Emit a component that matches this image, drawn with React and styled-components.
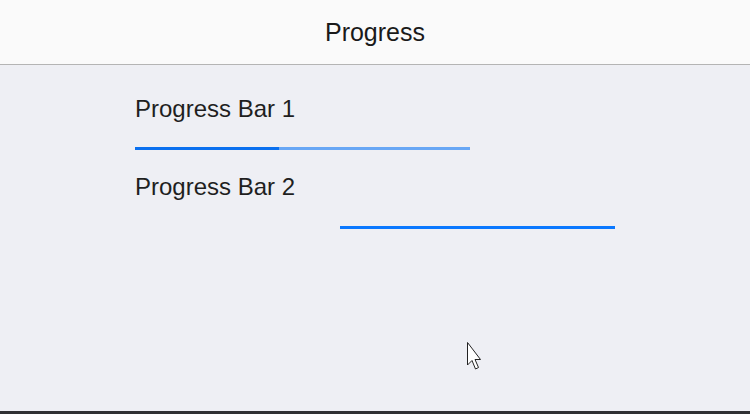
import React from "react";
import styled, { createGlobalStyle } from "styled-components";

const GlobalStyle = createGlobalStyle`
  html, body {
    margin: 0;
    padding: 0;
    height: 100%;
  }
  body {
    font-family: "Liberation Sans", Arial, sans-serif;
    background: #eeeff4;
    color: #1f1f1f;
  }
  #root {
    height: 100%;
  }
`;

const Page = styled.div`
  position: relative;
  height: 414px;
  display: flex;
  flex-direction: column;
  overflow: hidden;
`;

const Header = styled.header`
  height: 64px;
  flex-shrink: 0;
  display: flex;
  align-items: center;
  justify-content: center;
  background: #fafafa;
  border-bottom: 1px solid #b4b4b4;
`;

const Title = styled.h1`
  margin: 0;
  font-size: 25px;
  font-weight: 400;
  color: #1a1a1a;
`;

const Content = styled.main`
  flex: 1;
  display: flex;
  justify-content: center;
`;

const Column = styled.div`
  width: 480px;
  padding-top: 30px;
  display: flex;
  flex-direction: column;
`;

const Label = styled.div`
  font-size: 24px;
  line-height: 28px;
  color: #1f1f1f;
`;

const Track = styled.div`
  height: 3px;
  width: ${(p) => p.$width}px;
  margin-top: ${(p) => p.$top}px;
  margin-bottom: ${(p) => p.$bottom}px;
  margin-left: ${(p) => p.$offset || 0}px;
  background: ${(p) => p.$track};
  display: flex;
`;

const Fill = styled.div`
  height: 100%;
  background: #0a70ef;
`;

const BottomStrip = styled.div`
  height: 3px;
  flex-shrink: 0;
  background: #303134;
`;

const Cursor = styled.svg`
  position: absolute;
  left: 467px;
  top: 342px;
`;

export default function App() {
  const value = 0.43;
  return (
    <>
      <GlobalStyle />
      <Page>
        <Header>
          <Title>Progress</Title>
        </Header>
        <Content>
          <Column>
            <Label>Progress Bar 1</Label>
            <Track $width={335} $top={24} $bottom={23} $track="#68a7f5">
              <Fill style={{ width: `${value * 100}%` }} />
            </Track>
            <Label>Progress Bar 2</Label>
            <Track $width={275} $offset={205} $top={25} $bottom={0} $track="#0a78ff" />
          </Column>
        </Content>
        <BottomStrip />
        <Cursor width="14" height="28" viewBox="0 0 14 28">
          <path
            d="M0.5 0.5 L0.5 23 L5 18.5 L8.5 27 L11.5 25.5 L8 17.5 L13.5 17.5 Z"
            fill="#ffffff"
            stroke="#222"
            strokeWidth="1"
          />
        </Cursor>
      </Page>
    </>
  );
}
